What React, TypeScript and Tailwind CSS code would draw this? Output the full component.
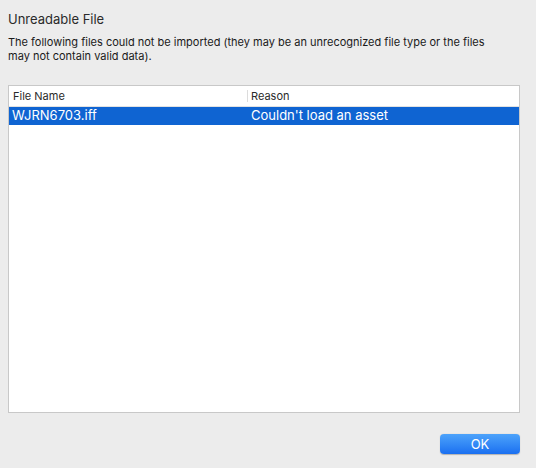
import React from "react";

export default function App() {
  return (
    <div
      className="w-[536px] h-[468px] bg-[#ececec] flex flex-col px-[8px] text-[#1a1a1a]"
      style={{ fontFamily: "Inter, 'Liberation Sans', sans-serif" }}
    >
      <div className="pt-[10px] text-[13px] leading-[18px] text-[#2a2a2a]">Unreadable File</div>
      <div className="mt-[7px] text-[11px] leading-[14px] w-[500px]">
        The following files could not be imported (they may be an unrecognized file type or the files may not contain valid data).
      </div>
      <div className="mt-[22px] w-[512px] h-[328px] bg-white border border-[#c8c8c8] flex flex-col">
        <div className="h-[21px] flex items-center text-[11px] text-[#2a2a2a] border-b border-[#e2e2e2]">
          <div className="w-[238px] pl-[4px]">File Name</div>
          <div className="w-px h-[12px] bg-[#dcdcdc]"></div>
          <div className="pl-[3px]">Reason</div>
        </div>
        <div className="h-[18px] flex items-center bg-[#0f64d2] text-white text-[13px]">
          <div className="w-[239px] pl-[3px]">WJRN6703.iff</div>
          <div className="pl-[3px]">Couldn't load an asset</div>
        </div>
      </div>
      <div className="flex justify-end mt-[21px] pr-[8px]">
        <button className="w-[80px] h-[20px] rounded-[4px] bg-gradient-to-b from-[#4da3fb] to-[#1a6ff0] text-white text-[13px] leading-[20px] shadow-[0_0.5px_1px_rgba(0,0,0,0.25)]">
          OK
        </button>
      </div>
    </div>
  );
}
